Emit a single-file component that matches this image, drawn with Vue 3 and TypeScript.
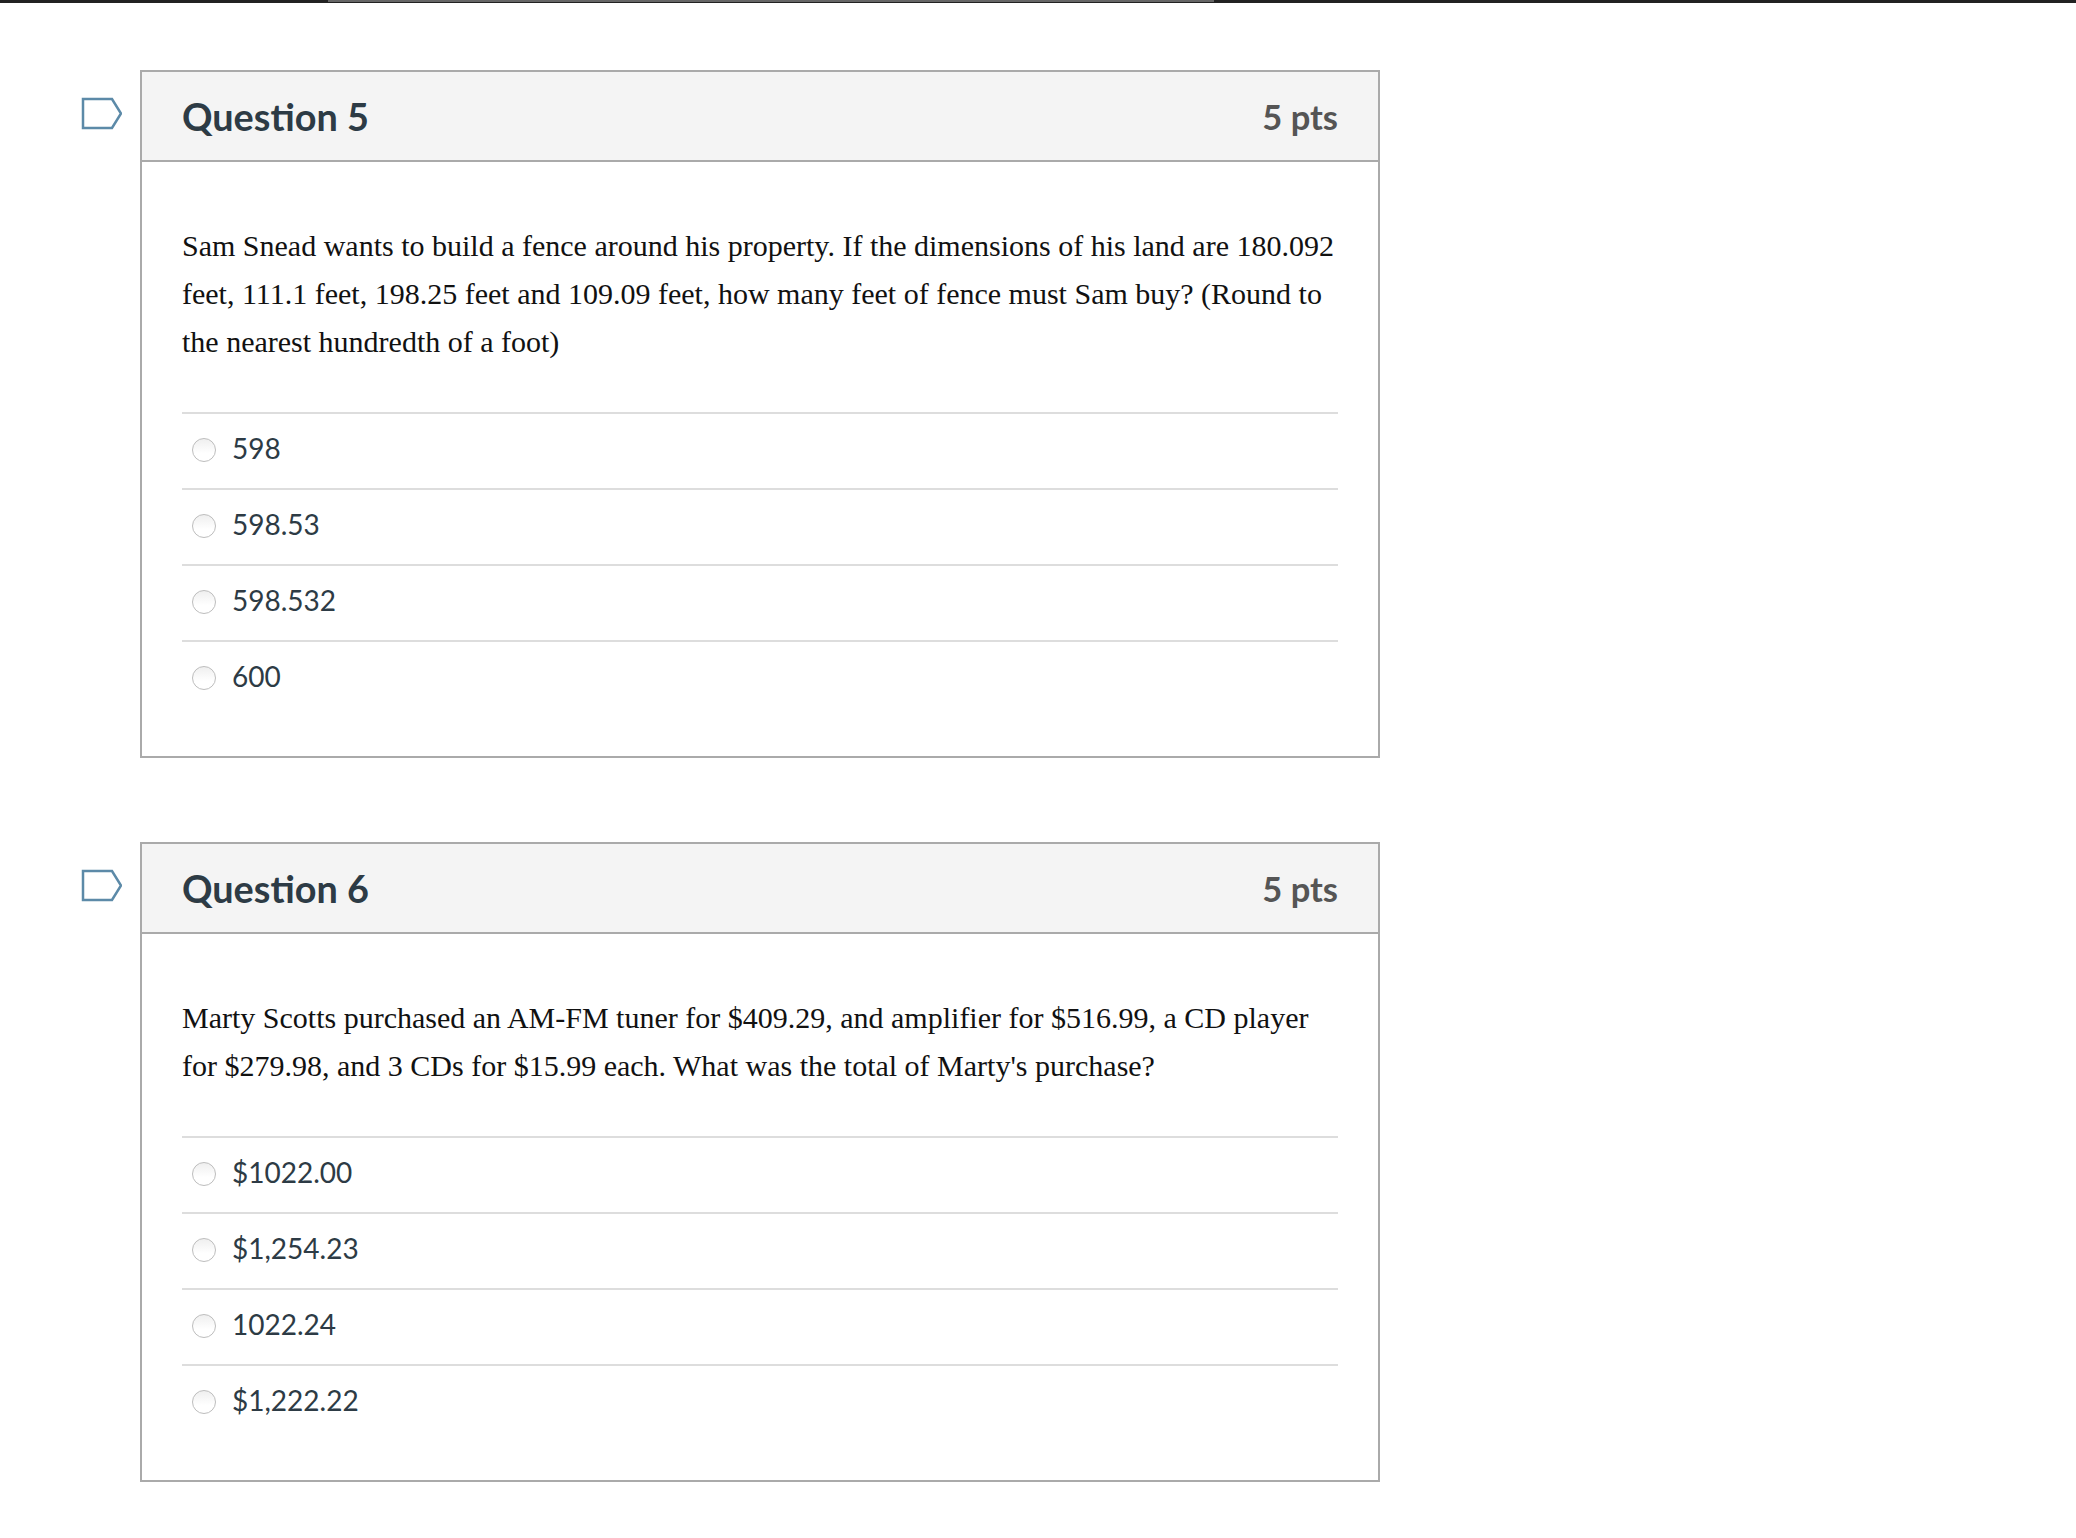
<script setup lang="ts">
interface Question { title: string; text: string; options: string[] }
const questions: Question[] = [
  {
    title: 'Question 5',
    text: 'Sam Snead wants to build a fence around his property. If the dimensions of his land are 180.092 feet, 111.1 feet, 198.25 feet and 109.09 feet, how many feet of fence must Sam buy? (Round to the nearest hundredth of a foot)',
    options: ['598', '598.53', '598.532', '600'],
  },
  {
    title: 'Question 6',
    text: "Marty Scotts purchased an AM-FM tuner for $409.29, and amplifier for $516.99, a CD player for $279.98, and 3 CDs for $15.99 each. What was the total of Marty's purchase?",
    options: ['$1022.00', '$1,254.23', '1022.24', '$1,222.22'],
  },
]
</script>

<template>
  <div class="page">
    <div class="topbar"><div class="seg dark1"></div><div class="seg mid"></div><div class="seg dark2"></div></div>
    <div class="list">
      <div v-for="q in questions" :key="q.title" class="row">
        <svg class="flag" width="42" height="36" viewBox="0 0 42 36">
          <path d="M3 5H32L41 19.500L32 34H3Z" fill="#fff" stroke="#5c8aa8" stroke-width="2.500" />
        </svg>
        <section class="card">
          <header class="head">
            <h2 class="title">{{ q.title }}</h2>
            <span class="pts">5 pts</span>
          </header>
          <div class="body">
            <p class="text">{{ q.text }}</p>
            <ul class="opts">
              <li v-for="o in q.options" :key="o" class="opt">
                <span class="radio"></span>
                <span class="label">{{ o }}</span>
              </li>
            </ul>
          </div>
        </section>
      </div>
    </div>
  </div>
</template>

<style>
html, body { margin: 0; background: #fff; }
</style>

<style scoped>
.page { width: 2076px; height: 1538px; overflow: hidden; background: #fff; }
.topbar { display: flex; height: 3px; box-sizing: border-box; border-bottom: 1px solid #222; }
.dark1 { width: 328px; background: #222; }
.mid { width: 886px; background: #666; }
.dark2 { flex: 1; background: #222; }
.list { display: flex; flex-direction: column; gap: 84px; padding: 67px 0 0 80px; }
.row { display: flex; align-items: flex-start; gap: 18px; }
.flag { margin-top: 24px; flex: none; }
.card { width: 1240px; box-sizing: border-box; border: 2px solid #aaa; }
.head { display: flex; justify-content: space-between; align-items: center; height: 90px; box-sizing: border-box; padding: 0 40px; background: #f4f4f4; border-bottom: 2px solid #aaa; }
.title { margin: 0; font: 700 37.800px "Lato", sans-serif; color: #2d3b45; font-variant-ligatures: common-ligatures; }
.pts { font: 700 34.500px "Lato", sans-serif; color: #555; }
.body { padding: 60px 40px 40px; }
.text { margin: 0 0 46px; font: 400 30px/48px "Liberation Serif", serif; color: #111; }
.opts { list-style: none; margin: 0; padding: 0; }
.opt { display: flex; align-items: center; height: 76px; box-sizing: border-box; border-top: 2px solid #ddd; padding: 0 0 6px 10px; }
.radio { width: 24px; height: 24px; box-sizing: border-box; border-radius: 50%; border: 1px solid #bdbdbd; background: linear-gradient(#efefef, #fff 65%); flex: none; margin-top: 3px; }
.label { margin-left: 16px; font: 400 28px "Lato", sans-serif; color: #2d3b45; }
</style>
